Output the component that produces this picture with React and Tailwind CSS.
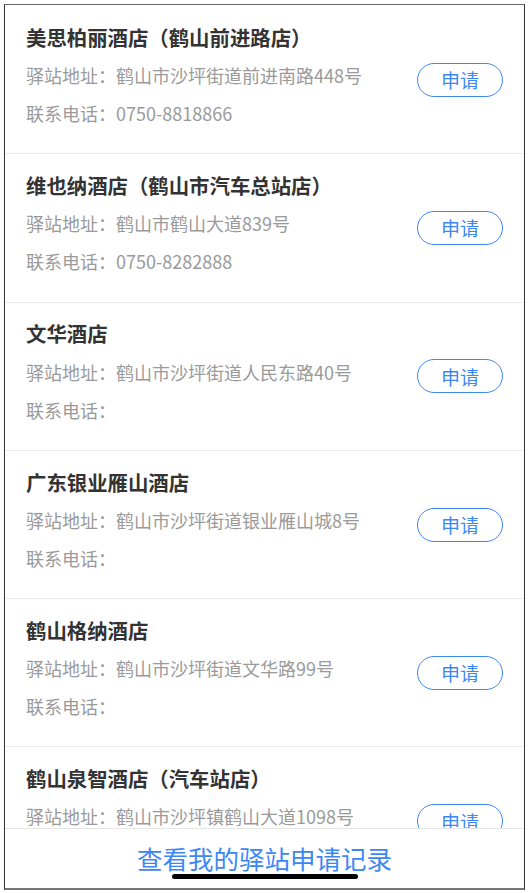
import React from "react";

const items = [
  { name: "美思柏丽酒店（鹤山前进路店）", addr: "鹤山市沙坪街道前进南路448号", tel: "0750-8818866" },
  { name: "维也纳酒店（鹤山市汽车总站店）", addr: "鹤山市鹤山大道839号", tel: "0750-8282888" },
  { name: "文华酒店", addr: "鹤山市沙坪街道人民东路40号", tel: "" },
  { name: "广东银业雁山酒店", addr: "鹤山市沙坪街道银业雁山城8号", tel: "" },
  { name: "鹤山格纳酒店", addr: "鹤山市沙坪街道文华路99号", tel: "" },
  { name: "鹤山泉智酒店（汽车站店）", addr: "鹤山市沙坪镇鹤山大道1098号", tel: "" },
];

export default function App() {
  return (
    <div
      className="w-[529px] h-[893px] bg-white pt-[4px] pl-[4px] pr-[4px] pb-[3px]"
      style={{ fontFamily: '"Noto Sans CJK SC", "Noto Sans", sans-serif' }}
    >
      <div className="relative h-[886px] border border-[#333] border-t-[#666] border-b-[#777] border-b-2 flex flex-col overflow-hidden">
        <div className="flex-1 overflow-hidden pt-px">
          {items.map((it, i) => (
            <div
              key={i}
              className="h-[148.3px] shrink-0 border-b border-[#ececec] px-[21px] flex items-center"
            >
              <div className="flex-1 self-stretch pt-[12px]">
                <div className="h-[38px] flex items-center text-[20.4px] font-bold text-[#333] leading-none">
                  {it.name}
                </div>
                <div className="h-[38px] flex items-center text-[18px] text-[#9a9a9a] leading-none">
                  驿站地址：{it.addr}
                </div>
                <div className="h-[38px] flex items-center text-[18px] text-[#9a9a9a] leading-none">
                  联系电话：{it.tel}
                </div>
              </div>
              <div className="w-[86px] h-[34px] rounded-full border border-[#3d87f5] text-[#3d87f5] text-[19px] flex items-center justify-center leading-none">
                申请
              </div>
            </div>
          ))}
        </div>
        <div className="h-[60px] shrink-0 border-t border-[#e6e6e6] bg-white flex items-center justify-center text-[25.5px] text-[#3d87f5] leading-none pb-[2px]">
          查看我的驿站申请记录
        </div>
        <div className="absolute left-[167px] bottom-[9px] w-[186px] h-[5px] rounded-full bg-black" />
      </div>
    </div>
  );
}
